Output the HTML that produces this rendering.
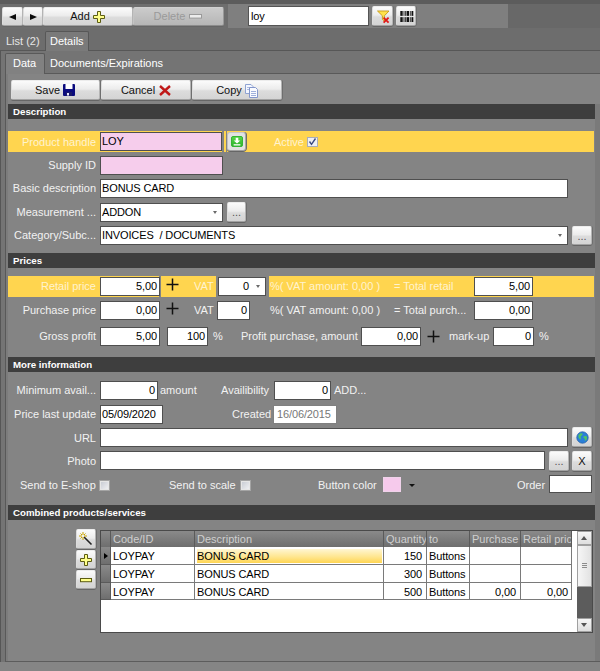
<!DOCTYPE html>
<html>
<head>
<meta charset="utf-8">
<title>Product details</title>
<style>
html,body{margin:0;padding:0;}
body{width:600px;height:671px;overflow:hidden;background:#6d6d6d;position:relative;
 font-family:"Liberation Sans",sans-serif;font-size:11px;color:#fff;}
div,span{box-sizing:border-box;}
.a{position:absolute;}
.bx{position:absolute;white-space:nowrap;}
.lbl{position:absolute;white-space:nowrap;height:18px;line-height:18px;color:#f2f2f2;}
.r{text-align:right;}
.inp{position:absolute;background:#fff;border:1px solid #4f4f4f;color:#000;height:19px;line-height:17px;padding:0 2px 0 1px;white-space:nowrap;overflow:hidden;letter-spacing:-0.12px;}
.pink{background:#f6cdec;}
.btn{position:absolute;border:1px solid;border-color:#ececec #b4b4b4 #a2a2a2 #dcdcdc;border-radius:2px;box-shadow:0 1px 0 #666,1px 0 0 #6e6e6e;color:#111;text-align:center;white-space:nowrap;
 background:linear-gradient(#fbfbfb 0%,#ececec 45%,#dcdcdc 55%,#d4d4d4 100%);}
.hdr{position:absolute;left:8px;width:587px;height:14px;background:#3e3e3e;color:#fff;font-weight:bold;font-size:9.7px;line-height:14px;padding-left:5px;}
.yel{position:absolute;left:8px;width:586px;background:#ffd54f;}
.cell{position:absolute;height:18px;line-height:18px;color:#000;white-space:nowrap;overflow:hidden;padding:0 4px 0 2px;letter-spacing:-0.12px;}
.gh{position:absolute;top:0;height:16px;line-height:16px;color:#cfcfcf;white-space:nowrap;overflow:hidden;padding-left:2px;background:linear-gradient(#8a8a8a,#6e6e6e);border-right:1px solid #5a5a5a;}
</style>
</head>
<body>
<!-- top band -->
<div class="a" style="left:0;top:0;width:600px;height:4px;background:#5c5c5c"></div>
<div class="a" style="left:0;top:4px;width:226px;height:25px;background:#6e6e6e"></div>
<div class="a" style="left:228px;top:4px;width:280px;height:24px;background:#7f7f7f"></div>
<div class="a" style="left:508px;top:4px;width:92px;height:24px;background:#686868"></div>

<!-- toolbar buttons -->
<div class="btn" style="left:2px;top:7px;width:21px;height:19px"><span class="a" style="left:6px;top:6px;width:0;height:0;border:3px solid transparent;border-right:7px solid #0a0a0a;border-left:none"></span></div>
<div class="btn" style="left:23px;top:7px;width:20px;height:19px"><span class="a" style="left:6px;top:6px;width:0;height:0;border:3px solid transparent;border-left:7px solid #0a0a0a;border-right:none"></span></div>
<div class="btn" style="left:43px;top:7px;width:90px;height:19px;line-height:17px"><span style="position:relative;left:-8px">Add</span>
 <svg class="a" style="left:49px;top:3px" width="12" height="12" viewBox="0 0 12 12"><path d="M4.5 0.5h3v4h4v3h-4v4h-3v-4h-4v-3h4z" fill="#ffff8a" stroke="#5c5c12" stroke-width="1"/></svg></div>
<div class="btn" style="left:133px;top:7px;width:91px;height:19px;line-height:17px;color:#9a9a9a;background:linear-gradient(#cbcbcb,#b6b6b6);border-color:#d0d0d0 #999 #8c8c8c #c4c4c4"><span style="position:relative;left:-9px">Delete</span>
 <svg class="a" style="left:55px;top:6px" width="13" height="5" viewBox="0 0 13 5"><rect x="0.5" y="0.5" width="12" height="3.6" fill="#ececec" stroke="#9a9a9a"/></svg></div>

<!-- search -->
<div class="inp" style="left:248px;top:6px;width:121px;height:20px;line-height:18px;border-color:#555;padding-left:2px">loy</div>
<div class="btn" style="left:372px;top:6px;width:21px;height:20px">
 <svg class="a" style="left:0;top:0" width="19" height="18" viewBox="0 0 19 18"><path d="M4.5 4h11.5l-4.6 4.8v5.2l-2-1.6v-3.6z" fill="#ffe24a" stroke="#c79a1a" stroke-width="0.9"/><path d="M10.6 10.6l5 5M15.6 10.6l-5 5" stroke="#e01818" stroke-width="1.8"/></svg></div>
<div class="btn" style="left:396px;top:6px;width:20px;height:20px">
 <svg class="a" style="left:3px;top:4px" width="14" height="11" viewBox="0 0 14 11"><path d="M1.5 0v11M7.8 0v11" stroke="#111" stroke-width="2.4"/><path d="M4 0v11M5.6 0v11M10.3 0v11" stroke="#222" stroke-width="0.9"/><path d="M12.4 0v11" stroke="#111" stroke-width="1.8"/><path d="M0 5.5h14" stroke="#e6e6e6" stroke-width="1.3"/></svg></div>

<!-- tab row 1 -->
<div class="a" style="left:0;top:50px;width:600px;height:1px;background:#575757"></div>
<div class="a" style="left:45px;top:31px;width:44px;height:20px;background:#7a7a7a;border:1px solid #575757;border-bottom:none;border-radius:2px 2px 0 0"></div>
<div class="lbl" style="left:6px;top:32px;color:#e6e6e6">List (2)</div>
<div class="lbl" style="left:50px;top:32px;color:#fff">Details</div>

<!-- outer panel -->
<div class="a" style="left:0;top:51px;width:600px;height:620px;background:#747474;border-left:1px solid #565656"></div>
<!-- tab row 2 -->
<div class="a" style="left:5px;top:73px;width:595px;height:1px;background:#595959"></div>
<div class="a" style="left:5px;top:53px;width:40px;height:21px;background:#818181;border:1px solid #595959;border-bottom:none;border-radius:2px 2px 0 0"></div>
<div class="lbl" style="left:13px;top:54px;color:#fff">Data</div>
<div class="lbl" style="left:50px;top:54px;color:#fff">Documents/Expirations</div>
<!-- inner panel -->
<div class="a" style="left:5px;top:74px;width:595px;height:588px;background:#848484;border-left:1px solid #595959;border-bottom:1px solid #5c5c5c"></div>
<div class="a" style="left:0;top:662px;width:600px;height:9px;background:#858585"></div>
<div class="a" style="left:6px;top:74px;width:2px;height:587px;background:#7c7c7c"></div>
<div class="a" style="left:595px;top:104px;width:5px;height:557px;background:#7a7a7a"></div>

<!-- Save / Cancel / Copy -->
<div class="btn" style="left:11px;top:80px;width:89px;height:20px;line-height:18px"><span style="position:relative;left:-8px">Save</span>
 <svg class="a" style="left:51px;top:3px" width="12" height="12" viewBox="0 0 12 12"><rect x="0" y="0" width="12" height="12" rx="1" fill="#0b0b7e"/><rect x="2.5" y="0" width="7" height="5" fill="#fff"/><rect x="3" y="8" width="6" height="4" fill="#1a1a6a"/><rect x="4" y="9" width="2" height="2.5" fill="#e8e8ff"/></svg></div>
<div class="btn" style="left:101px;top:80px;width:90px;height:20px;line-height:18px"><span style="position:relative;left:-8px">Cancel</span>
 <svg class="a" style="left:57px;top:4px" width="12" height="11" viewBox="0 0 12 11"><path d="M1 1l10 9M11 1l-10 9" stroke="#c01818" stroke-width="2.4"/></svg></div>
<div class="btn" style="left:192px;top:80px;width:90px;height:20px;line-height:18px"><span style="position:relative;left:-8px">Copy</span>
 <svg class="a" style="left:52px;top:3px" width="14" height="14" viewBox="0 0 14 14"><path d="M0.5 0.5h5.5l2 2v7h-7.5z" fill="#f4f7ff" stroke="#8fa3d2"/><path d="M2 3.5h3M2 5.5h3" stroke="#aebbe0" stroke-width="1"/><path d="M4.5 3.500h6l2 2v8h-8z" fill="#fafbff" stroke="#8497cc"/><path d="M6 7.500h5M6 9.500h5M6 11.500h5" stroke="#9fb0dc" stroke-width="1"/></svg></div>

<!-- Description -->
<div class="hdr" style="top:104px;height:15px;line-height:15px">Description</div>
<div class="yel" style="top:131px;height:21px"></div>
<div class="a" style="left:222px;top:131px;width:5px;height:21px;background:#848484"></div>
<div class="a" style="left:224px;top:131px;width:2px;height:21px;background:#ffd54f"></div>
<div class="lbl r" style="left:8px;width:88px;top:133px;color:#fff3cf">Product handle</div>
<div class="inp pink" style="left:100px;top:132px;width:122px">LOY</div>
<div class="btn" style="left:227px;top:132px;width:19px;height:19px;background:#e2e2e2;border-color:#c8c8c8 #a8a8a8 #a0a0a0 #c0c0c0;border-radius:3px">
 <svg class="a" style="left:3px;top:3px" width="12" height="11" viewBox="0 0 12 11"><defs><linearGradient id="gg" x1="0" y1="0" x2="0" y2="1"><stop offset="0" stop-color="#5ad84a"/><stop offset="1" stop-color="#2cb02c"/></linearGradient></defs><rect x="0.5" y="0.5" width="11" height="10" rx="1.5" fill="url(#gg)" stroke="#35b535"/><path d="M4.700 1.800h2.600v2.700h2l-3.300 3.100L2.700 4.500h2z" fill="#fff"/><rect x="2.600" y="8.200" width="6.800" height="1.300" fill="#fff"/></svg></div>
<div class="lbl" style="left:274px;top:133px;color:#fff3cf">Active</div>
<div class="a" style="left:307px;top:137px;width:11px;height:10px;background:#eef0f6;border:1px solid #a9adb8"><svg class="a" style="left:0px;top:0px" width="9" height="8" viewBox="0 0 9 8"><path d="M1.500 3.500l2 2.800l4-5.800" fill="none" stroke="#3a4a80" stroke-width="1.400"/></svg></div>

<div class="lbl r" style="left:8px;width:88px;top:156px">Supply ID</div>
<div class="inp pink" style="left:100px;top:156px;width:123px"></div>

<div class="lbl r" style="left:8px;width:88px;top:179px">Basic description</div>
<div class="inp" style="left:100px;top:179px;width:468px">BONUS CARD</div>

<div class="lbl r" style="left:8px;width:88px;top:203px">Measurement ...</div>
<div class="inp" style="left:100px;top:203px;width:123px">ADDON<span class="a" style="right:5px;top:7px;width:0;height:0;border:2.5px solid transparent;border-top:3px solid #6a6a6a;border-bottom:none"></span></div>
<div class="btn" style="left:227px;top:202px;width:19px;height:20px;line-height:19px;color:#555">...</div>

<div class="lbl r" style="left:8px;width:88px;top:226px">Category/Subc...</div>
<div class="inp" style="left:100px;top:226px;width:468px">INVOICES&nbsp; / DOCUMENTS<span class="a" style="right:5px;top:7px;width:0;height:0;border:2.5px solid transparent;border-top:3px solid #6a6a6a;border-bottom:none"></span></div>
<div class="btn" style="left:572px;top:226px;width:20px;height:19px;line-height:18px;color:#555">...</div>

<!-- Prices -->
<div class="hdr" style="top:253px;height:15px;line-height:15px">Prices</div>
<div class="yel" style="top:276px;height:21px"></div>
<div class="a" style="left:159px;top:276px;width:2px;height:21px;background:#848484"></div>
<div class="a" style="left:216px;top:276px;width:53px;height:21px;background:#848484"></div>
<div class="lbl r" style="left:8px;width:88px;top:277px;color:#fff3cf">Retail price</div>
<div class="inp r" style="left:100px;top:277px;width:60px">5,00</div>
<svg class="a" style="left:166px;top:278px" width="13" height="13" viewBox="0 0 13 13"><path d="M6.5 0.5v12M0.5 6.5h12" stroke="#111" stroke-width="1.5"/></svg>
<div class="lbl" style="left:194px;top:277px;color:#fff3cf">VAT</div>
<div class="inp" style="left:218px;top:277px;width:48px"><span class="a r" style="left:0;width:30px">0</span><span class="a" style="right:5px;top:7px;width:0;height:0;border:2.5px solid transparent;border-top:3px solid #6a6a6a;border-bottom:none"></span></div>
<div class="lbl" style="left:270px;top:277px;color:#fff3cf">%( VAT amount: 0,00 )</div>
<div class="lbl" style="left:394px;top:277px;color:#fff3cf">= Total retail</div>
<div class="inp r" style="left:474px;top:277px;width:59px">5,00</div>

<div class="lbl r" style="left:8px;width:88px;top:301px">Purchase price</div>
<div class="inp r" style="left:100px;top:301px;width:60px">0,00</div>
<svg class="a" style="left:166px;top:302px" width="13" height="13" viewBox="0 0 13 13"><path d="M6.5 0.5v12M0.5 6.5h12" stroke="#111" stroke-width="1.5"/></svg>
<div class="lbl" style="left:194px;top:301px">VAT</div>
<div class="inp r" style="left:217px;top:301px;width:33px">0</div>
<div class="lbl" style="left:270px;top:301px">%( VAT amount: 0,00 )</div>
<div class="lbl" style="left:394px;top:301px">= Total purch...</div>
<div class="inp r" style="left:474px;top:301px;width:59px">0,00</div>

<div class="lbl r" style="left:8px;width:88px;top:327px">Gross profit</div>
<div class="inp r" style="left:100px;top:327px;width:60px">5,00</div>
<div class="inp r" style="left:167px;top:327px;width:41px">100</div>
<div class="lbl" style="left:213px;top:327px">%</div>
<div class="lbl" style="left:241px;top:327px">Profit purchase, amount</div>
<div class="inp r" style="left:361px;top:327px;width:60px">0,00</div>
<svg class="a" style="left:427px;top:330px" width="13" height="13" viewBox="0 0 13 13"><path d="M6.5 0.5v12M0.5 6.5h12" stroke="#111" stroke-width="1.5"/></svg>
<div class="lbl" style="left:449px;top:327px">mark-up</div>
<div class="inp r" style="left:493px;top:327px;width:41px">0</div>
<div class="lbl" style="left:539px;top:327px">%</div>

<!-- More information -->
<div class="hdr" style="top:357px;height:15px;line-height:15px">More information</div>
<div class="lbl r" style="left:8px;width:88px;top:381px">Minimum avail...</div>
<div class="inp r" style="left:100px;top:381px;width:58px">0</div>
<div class="lbl" style="left:160px;top:381px">amount</div>
<div class="lbl" style="left:221px;top:381px">Availibility</div>
<div class="inp r" style="left:274px;top:381px;width:57px">0</div>
<div class="lbl" style="left:334px;top:381px">ADD...</div>

<div class="lbl r" style="left:8px;width:88px;top:405px">Price last update</div>
<div class="inp" style="left:100px;top:405px;width:63px;padding:0 1px">05/09/2020</div>
<div class="lbl" style="left:232px;top:405px">Created</div>
<div class="inp" style="left:273px;top:405px;width:64px;padding:0 1px 0 3px;color:#777;border-color:#808080">16/06/2015</div>

<div class="lbl r" style="left:8px;width:88px;top:429px">URL</div>
<div class="inp" style="left:100px;top:428px;width:468px"></div>
<div class="btn" style="left:572px;top:427px;width:20px;height:20px">
 <svg class="a" style="left:3px;top:3px" width="13" height="13" viewBox="0 0 13 13"><circle cx="6.5" cy="6.5" r="5.7" fill="#2a7fd8" stroke="#2a62a8" stroke-width="0.8"/><path d="M2.5 4c1.5-2 3.5-2 4-1.200s-0.500 1.500-1.500 2.200s0.500 2-0.500 3.500c-1.500-0.500-2.500-2.500-2-4.500zM7.500 5.500c1.500-1 3-0.500 3.500 0.500s-0.500 3.500-2 4c-0.500-1.500 0.500-2-0.500-2.500s-1.500-1.500-1-2z" fill="#4fc465"/></svg></div>

<div class="lbl r" style="left:8px;width:88px;top:452px">Photo</div>
<div class="inp" style="left:100px;top:451px;width:445px"></div>
<div class="btn" style="left:549px;top:451px;width:20px;height:20px;line-height:18px;color:#555">...</div>
<div class="btn" style="left:572px;top:451px;width:20px;height:20px;line-height:18px">X</div>

<div class="lbl" style="left:20px;top:476px">Send to E-shop</div>
<div class="a" style="left:99px;top:480px;width:11px;height:11px;background:linear-gradient(135deg,#c4c8d0,#f4f4f6);border:1px solid #a4a4a4;box-shadow:inset 0 0 0 1px #e6e6e6"></div>
<div class="lbl" style="left:169px;top:476px">Send to scale</div>
<div class="a" style="left:240px;top:480px;width:11px;height:11px;background:linear-gradient(135deg,#c4c8d0,#f4f4f6);border:1px solid #a4a4a4;box-shadow:inset 0 0 0 1px #e6e6e6"></div>
<div class="lbl" style="left:318px;top:476px">Button color</div>
<div class="a" style="left:383px;top:477px;width:18px;height:15px;background:#f6caec;border:1px solid #f0d2ea"></div>
<span class="a" style="left:409px;top:484px;width:0;height:0;border:3px solid transparent;border-top:3.500px solid #111;border-bottom:none"></span>
<div class="lbl" style="left:517px;top:476px">Order</div>
<div class="inp" style="left:549px;top:475px;width:43px;height:18px"></div>

<!-- Combined -->
<div class="hdr" style="top:505px;height:15px;line-height:15px">Combined products/services</div>
<div class="btn" style="left:76px;top:529px;width:20px;height:20px">
 <svg class="a" style="left:2px;top:2px" width="14" height="14" viewBox="0 0 14 14"><path d="M5 5l7.500 7.500" stroke="#222" stroke-width="1.6"/><path d="M4 0v3M4 5v3M0 4h3M5 4h3M1.5 1.5l1.5 1.5M6.5 1.5L5 3M1.5 6.5L3 5" stroke="#c9a400" stroke-width="1"/></svg></div>
<div class="btn" style="left:76px;top:550px;width:20px;height:19px">
 <svg class="a" style="left:3px;top:3px" width="12" height="12" viewBox="0 0 12 12"><path d="M4.5 0.5h3v4h4v3h-4v4h-3v-4h-4v-3h4z" fill="#ffff8a" stroke="#5c5c12" stroke-width="1"/></svg></div>
<div class="btn" style="left:76px;top:570px;width:20px;height:19px">
 <svg class="a" style="left:3px;top:7px" width="12" height="5" viewBox="0 0 12 5"><rect x="0.5" y="0.5" width="11" height="3.2" fill="#ffff8a" stroke="#5c5c12"/></svg></div>

<div class="a" id="grid" style="left:100px;top:530px;width:493px;height:103px;background:#fff;border:1px solid #4a4a4a;overflow:hidden">
 <div class="gh" style="left:0px;width:10px"></div>
 <div class="gh" style="left:10px;width:84px">Code/ID</div>
 <div class="gh" style="left:94px;width:189px">Description</div>
 <div class="gh" style="left:283px;width:43px">Quantity</div>
 <div class="gh" style="left:326px;width:43px">to</div>
 <div class="gh" style="left:369px;width:51px">Purchase</div>
 <div class="gh" style="left:420px;width:51px">Retail price</div>
 <div class="a" style="left:0;top:16px;width:471px;height:53px;border-right:1px solid #7a7a7a"></div>
 <div class="a" style="left:0;top:33px;width:471px;height:1px;background:#7a7a7a"></div>
 <div class="a" style="left:0;top:51px;width:471px;height:1px;background:#7a7a7a"></div>
 <div class="a" style="left:0;top:68px;width:471px;height:1px;background:#7a7a7a"></div>
 <div class="a" style="left:93px;top:16px;width:1px;height:52px;background:#7a7a7a"></div>
 <div class="a" style="left:282px;top:16px;width:1px;height:52px;background:#7a7a7a"></div>
 <div class="a" style="left:325px;top:16px;width:1px;height:52px;background:#7a7a7a"></div>
 <div class="a" style="left:368px;top:16px;width:1px;height:52px;background:#7a7a7a"></div>
 <div class="a" style="left:419px;top:16px;width:1px;height:52px;background:#7a7a7a"></div>
 <div class="a" style="left:0;top:16px;width:10px;height:18px;background:linear-gradient(#8a8a8a,#6e6e6e);border-right:1px solid #5a5a5a;border-bottom:1px solid #5a5a5a"></div>
 <div class="a" style="left:0;top:34px;width:10px;height:18px;background:linear-gradient(#8a8a8a,#6e6e6e);border-right:1px solid #5a5a5a;border-bottom:1px solid #5a5a5a"></div>
 <div class="a" style="left:0;top:52px;width:10px;height:17px;background:linear-gradient(#8a8a8a,#6e6e6e);border-right:1px solid #5a5a5a;border-bottom:1px solid #5a5a5a"></div>
 <span class="a" style="left:3px;top:22px;width:0;height:0;border:3.5px solid transparent;border-left:4.5px solid #000;border-right:none"></span>
 <div class="a" style="left:96px;top:18px;width:185px;height:14px;background:linear-gradient(#fff6d2,#ffe690 55%,#ffd552)"></div>
 <div class="cell" style="left:10px;top:16px">LOYPAY</div><div class="cell" style="left:94px;top:16px">BONUS CARD</div><div class="cell r" style="left:283px;top:16px;width:42px">150</div><div class="cell" style="left:326px;top:16px">Buttons</div>
 <div class="cell" style="left:10px;top:34px">LOYPAY</div><div class="cell" style="left:94px;top:34px">BONUS CARD</div><div class="cell r" style="left:283px;top:34px;width:42px">300</div><div class="cell" style="left:326px;top:34px">Buttons</div>
 <div class="cell" style="left:10px;top:52px">LOYPAY</div><div class="cell" style="left:94px;top:52px">BONUS CARD</div><div class="cell r" style="left:283px;top:52px;width:42px">500</div><div class="cell" style="left:326px;top:52px">Buttons</div><div class="cell r" style="left:369px;top:52px;width:50px">0,00</div><div class="cell r" style="left:420px;top:52px;width:51px">0,00</div>
 <!-- scrollbar -->
 <div class="a" style="left:476px;top:0;width:15px;height:101px;background:#5c5c5c"></div>
 <div class="a" style="left:476px;top:0;width:15px;height:14px;background:linear-gradient(#f6f6f6,#dedede);border:1px solid #a0a0a0"></div>
 <span class="a" style="left:480px;top:5px;width:0;height:0;border:3.5px solid transparent;border-bottom:4px solid #555;border-top:none"></span>
 <div class="a" style="left:476px;top:14px;width:15px;height:42px;background:linear-gradient(90deg,#f6f6f6,#e2e2e2);border:1px solid #a0a0a0"></div>
 <div class="a" style="left:481px;top:32px;width:5px;height:1px;background:#8c8c8c;box-shadow:0 2px 0 #8c8c8c,0 4px 0 #8c8c8c"></div>
 <div class="a" style="left:476px;top:87px;width:15px;height:14px;background:linear-gradient(#f6f6f6,#dedede);border:1px solid #a0a0a0"></div>
 <span class="a" style="left:480px;top:92px;width:0;height:0;border:3.5px solid transparent;border-top:4px solid #555;border-bottom:none"></span>
</div>
</body>
</html>
